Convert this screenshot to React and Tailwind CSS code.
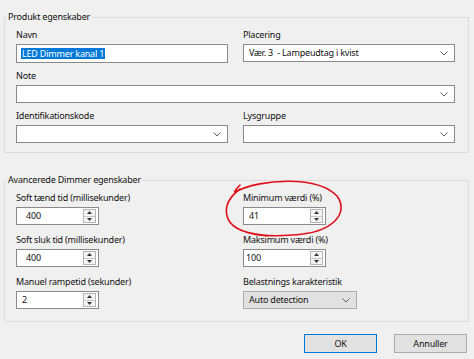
import React from 'react';

function Chevron({ className = '' }) {
    return (
        <svg width="8" height="5" viewBox="0 0 8 5" className={className}>
            <path d="M0.5 0.5 L4 4 L7.5 0.5" fill="none" stroke="#606060" strokeWidth="1" />
        </svg>
    );
}

function Select({ value, className = '' }) {
    return (
        <div className={`h-[18px] bg-white border border-[#8a8a8a] flex items-center justify-between pl-[5px] pr-[6px] ${className}`}>
            <span className="whitespace-pre">{value}</span>
            <Chevron />
        </div>
    );
}

function Spin({ value, pad = 'pl-[5px]' }) {
    return (
        <div className={`w-[83px] h-[18px] bg-white border border-[#8a8a8a] flex items-center justify-between ${pad} pr-[2px]`}>
            <span>{value}</span>
            <div className="w-[13px] h-[14px] border border-[#b5b5b5] bg-[#f4f4f4] flex flex-col">
                <div className="flex-1 flex items-center justify-center border-b border-[#c8c8c8]">
                    <svg width="5" height="3" viewBox="0 0 5 3"><path d="M0 3 L2.5 0 L5 3 Z" fill="#333" /></svg>
                </div>
                <div className="flex-1 flex items-center justify-center">
                    <svg width="5" height="3" viewBox="0 0 5 3"><path d="M0 0 L2.5 3 L5 0 Z" fill="#333" /></svg>
                </div>
            </div>
        </div>
    );
}

function Field({ label, children, className = '' }) {
    return (
        <div className={`flex flex-col ${className}`}>
            <label className="leading-[13px] mb-[3px]">{label}</label>
            {children}
        </div>
    );
}

export default function App() {
    return (
        <div className="relative w-[474px] h-[359px] overflow-hidden bg-[#f0f0f0] text-[9px] tracking-[-0.2px] text-[#111] font-['Noto_Sans',sans-serif]">
            <fieldset className="ml-[4px] mt-[10px] w-[465px] border border-[#dcdcdc]">
                <legend className="ml-[2px] px-[1px] leading-[14px]">Produkt egenskaber</legend>
                <div className="pl-[11px] pr-[13px] pt-[4px] pb-[9px] flex flex-col gap-[6px]">
                    <div className="grid grid-cols-2 gap-[15px]">
                        <Field label="Navn">
                            <div className="h-[19px] bg-white border border-[#8a8a8a] flex items-center pl-[4px]">
                                <span className="bg-[#0078d7] text-white leading-[11px] px-[1px]">LED Dimmer kanal 1</span>
                            </div>
                        </Field>
                        <Field label="Placering">
                            <Select value="Vær. 3  - Lampeudtag i kvist" />
                        </Field>
                    </div>
                    <Field label="Note">
                        <Select value="" />
                    </Field>
                    <div className="grid grid-cols-2 gap-[15px]">
                        <Field label="Identifikationskode">
                            <Select value="" />
                        </Field>
                        <Field label="Lysgruppe">
                            <Select value="" />
                        </Field>
                    </div>
                </div>
            </fieldset>

            <fieldset className="ml-[4px] mt-[20px] w-[465px] border border-[#dcdcdc]">
                <legend className="ml-[2px] px-[1px] leading-[14px]">Avancerede Dimmer egenskaber</legend>
                <div className="pl-[11px] pr-[13px] pt-[4px] pb-[12px] grid grid-cols-2 gap-x-[15px] gap-y-[8px]">
                    <Field label="Soft tænd tid (millisekunder)">
                        <Spin value="400" pad="pl-[9px]" />
                    </Field>
                    <Field label="Minimum værdi (%)">
                        <Spin value="41" />
                    </Field>
                    <Field label="Soft sluk tid (millisekunder)">
                        <Spin value="400" pad="pl-[9px]" />
                    </Field>
                    <Field label="Maksimum værdi (%)">
                        <Spin value="100" pad="pl-[2px]" />
                    </Field>
                    <Field label="Manuel rampetid (sekunder)">
                        <Spin value="2" />
                    </Field>
                    <Field label="Belastnings karakteristik">
                        <div className="w-[114px] h-[18px] bg-[#e1e1e1] border border-[#adadad] flex items-center justify-between pl-[5px] pr-[6px]">
                            <span>Auto detection</span>
                            <Chevron />
                        </div>
                    </Field>
                </div>
            </fieldset>

            <div className="flex justify-end gap-[17px] pr-[7px] mt-[12px]">
                <button className="w-[73px] h-[19px] bg-[#e1e1e1] border border-[#0078d7] leading-none">OK</button>
                <button className="w-[73px] h-[19px] bg-[#e1e1e1] border border-[#adadad] leading-none">Annuller</button>
            </div>

            <svg className="absolute left-0 top-0 pointer-events-none" width="474" height="359">
                <path
                    d="M240 185 C236 189 234 192 235 192 C262 178 318 176 337 196 C349 212 335 233 292 235 C258 238 231 232 227 216 C224 204 232 195 240 189"
                    fill="none"
                    stroke="#e0101a"
                    strokeWidth="1.6"
                    strokeLinecap="round"
                />
            </svg>
        </div>
    );
}
